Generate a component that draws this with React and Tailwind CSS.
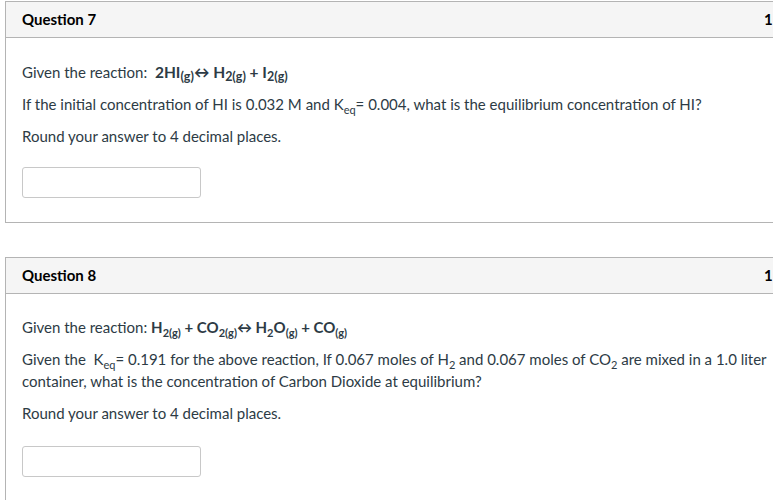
import React from 'react';

const sub = 'text-[11px] relative top-[4px] leading-none';
const subBig = 'text-[12.5px] relative top-[3px] leading-none';

function Card({ num, children }) {
  return (
    <div className="w-[809px] ml-[5px] border border-[#b4b4b4] bg-white">
      <div className="h-[36px] flex items-center justify-between pl-[16px] pr-[16px] bg-[#f5f5f5] border-b border-[#b4b4b4]">
        <span className="text-[15px] font-bold text-black">Question {num}</span>
        <span className="text-[15px] font-bold text-black">1 pts</span>
      </div>
      {children}
    </div>
  );
}

function Answer() {
  return <div className="w-[179px] h-[31px] border border-[#c8c8c8] rounded-[3px] bg-white" />;
}

export default function App() {
  return (
    <div
      className="w-[773px] h-[500px] overflow-hidden bg-white text-[#2d3b45] pt-px"
      style={{ fontFamily: 'Lato, "Open Sans", sans-serif' }}
    >
      <Card num={7}>
        <div className="pl-[16px] pt-[23px] pb-[24px] text-[15px] leading-[22px]">
          <p className="mb-[10px]">
            Given the reaction:&nbsp; <b className="text-[15.5px]">2HI<span className={subBig}>(g)</span>↔ H<span className={subBig}>2(g)</span> + I<span className={subBig}>2(g)</span></b>
          </p>
          <p className="mb-[10px]">
            If the initial concentration of HI is 0.032 M and K<span className={sub}>eq</span>= 0.004, what is the equilibrium concentration of HI?
          </p>
          <p className="mb-[20px]">Round your answer to 4 decimal places.</p>
          <Answer />
        </div>
      </Card>
      <div className="h-[34px]" />
      <Card num={8}>
        <div className="pl-[16px] pt-[22px] pb-[24px] text-[15px] leading-[22px]">
          <p className="mb-[10px]">
            Given the reaction: <b>H<span className={sub}>2(g)</span> + CO<span className={sub}>2(g)</span>↔ H<span className={sub}>2</span>O<span className={sub}>(g)</span> + CO<span className={sub}>(g)</span></b>
          </p>
          <p className="mb-[10px] pr-[40px]">
            Given the&nbsp; K<span className={sub}>eq</span>= 0.191 for the above reaction, If 0.067 moles of H<span className={sub}>2</span> and 0.067 moles of CO<span className={sub}>2</span> are mixed in a 1.0 liter container, what is the concentration of Carbon Dioxide at equilibrium?
          </p>
          <p className="mb-[22px]">Round your answer to 4 decimal places.</p>
          <Answer />
        </div>
      </Card>
    </div>
  );
}
